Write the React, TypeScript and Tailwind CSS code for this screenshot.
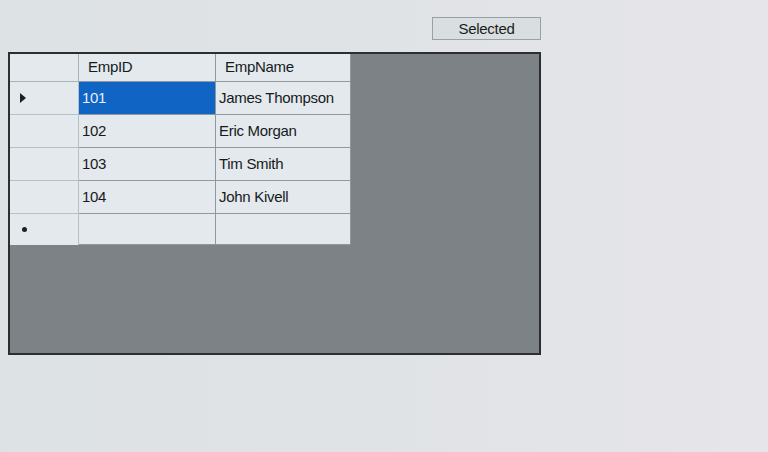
const ROWS = [
  { id: "101", name: "James Thompson" },
  { id: "102", name: "Eric Morgan" },
  { id: "103", name: "Tim Smith" },
  { id: "104", name: "John Kivell" },
];

const cell = "border-r border-b border-[#8f989e] bg-[#e3e9ec] flex items-center";

export default function App() {
  return (
    <div
      className="w-[768px] h-[452px] bg-gradient-to-r from-[#dde2e5] via-[#e0e3e6] to-[#e6e5ea] relative overflow-hidden text-[15px] tracking-[-0.3px] text-[#161a1d]"
      style={{ fontFamily: '"Liberation Sans", Arial, sans-serif' }}
    >
      <div className="flex justify-end w-[541px] pt-[17px]">
        <button className="w-[109px] h-[23px] border border-[#9aa0a4] bg-[#d9dee1] text-[15px] leading-none text-[#1b1e20]">
          Selected
        </button>
      </div>
      <div className="ml-[8px] mt-[12px] w-[533px] h-[303px] border-2 border-[#2b2f31] bg-[#7c8286]">
        <div className="grid grid-cols-[69px_137px_135px] w-fit">
          <div className="h-[28px] border-r border-b border-[#a9b2b7] bg-[#e3e9ec]" />
          <div className={`${cell} h-[28px] pl-[9px]`}>EmpID</div>
          <div className={`${cell} h-[28px] pl-[9px]`}>EmpName</div>
          {ROWS.map((r, i) => (
            <div key={r.id} className="contents">
              <div className="h-[33px] border-r border-b border-[#b6c0c5] bg-[#e3e9ec] flex items-center pl-[10px]">
                {i === 0 && (
                  <svg width="6" height="10" viewBox="0 0 6 10">
                    <path d="M0 0 L6 5 L0 10 Z" fill="#1d2124" />
                  </svg>
                )}
              </div>
              <div
                className={
                  i === 0
                    ? "h-[33px] border-r border-b border-[#8f989e] bg-[#0f64c4] text-[#e6eef8] flex items-center pl-[3px]"
                    : `${cell} h-[33px] pl-[3px]`
                }
              >
                {r.id}
              </div>
              <div className={`${cell} h-[33px] pl-[3px]`}>{r.name}</div>
            </div>
          ))}
          <div className="h-[31px] border-r border-[#b6c0c5] bg-[#e3e9ec] flex items-center pl-[12px]">
            <span className="w-[5px] h-[5px] rounded-full bg-[#1d2124]" />
          </div>
          <div className="h-[31px] border-r border-b border-[#8f989e] bg-[#e3e9ec]" />
          <div className="h-[31px] border-r border-b border-[#8f989e] bg-[#e3e9ec]" />
        </div>
      </div>
    </div>
  );
}
